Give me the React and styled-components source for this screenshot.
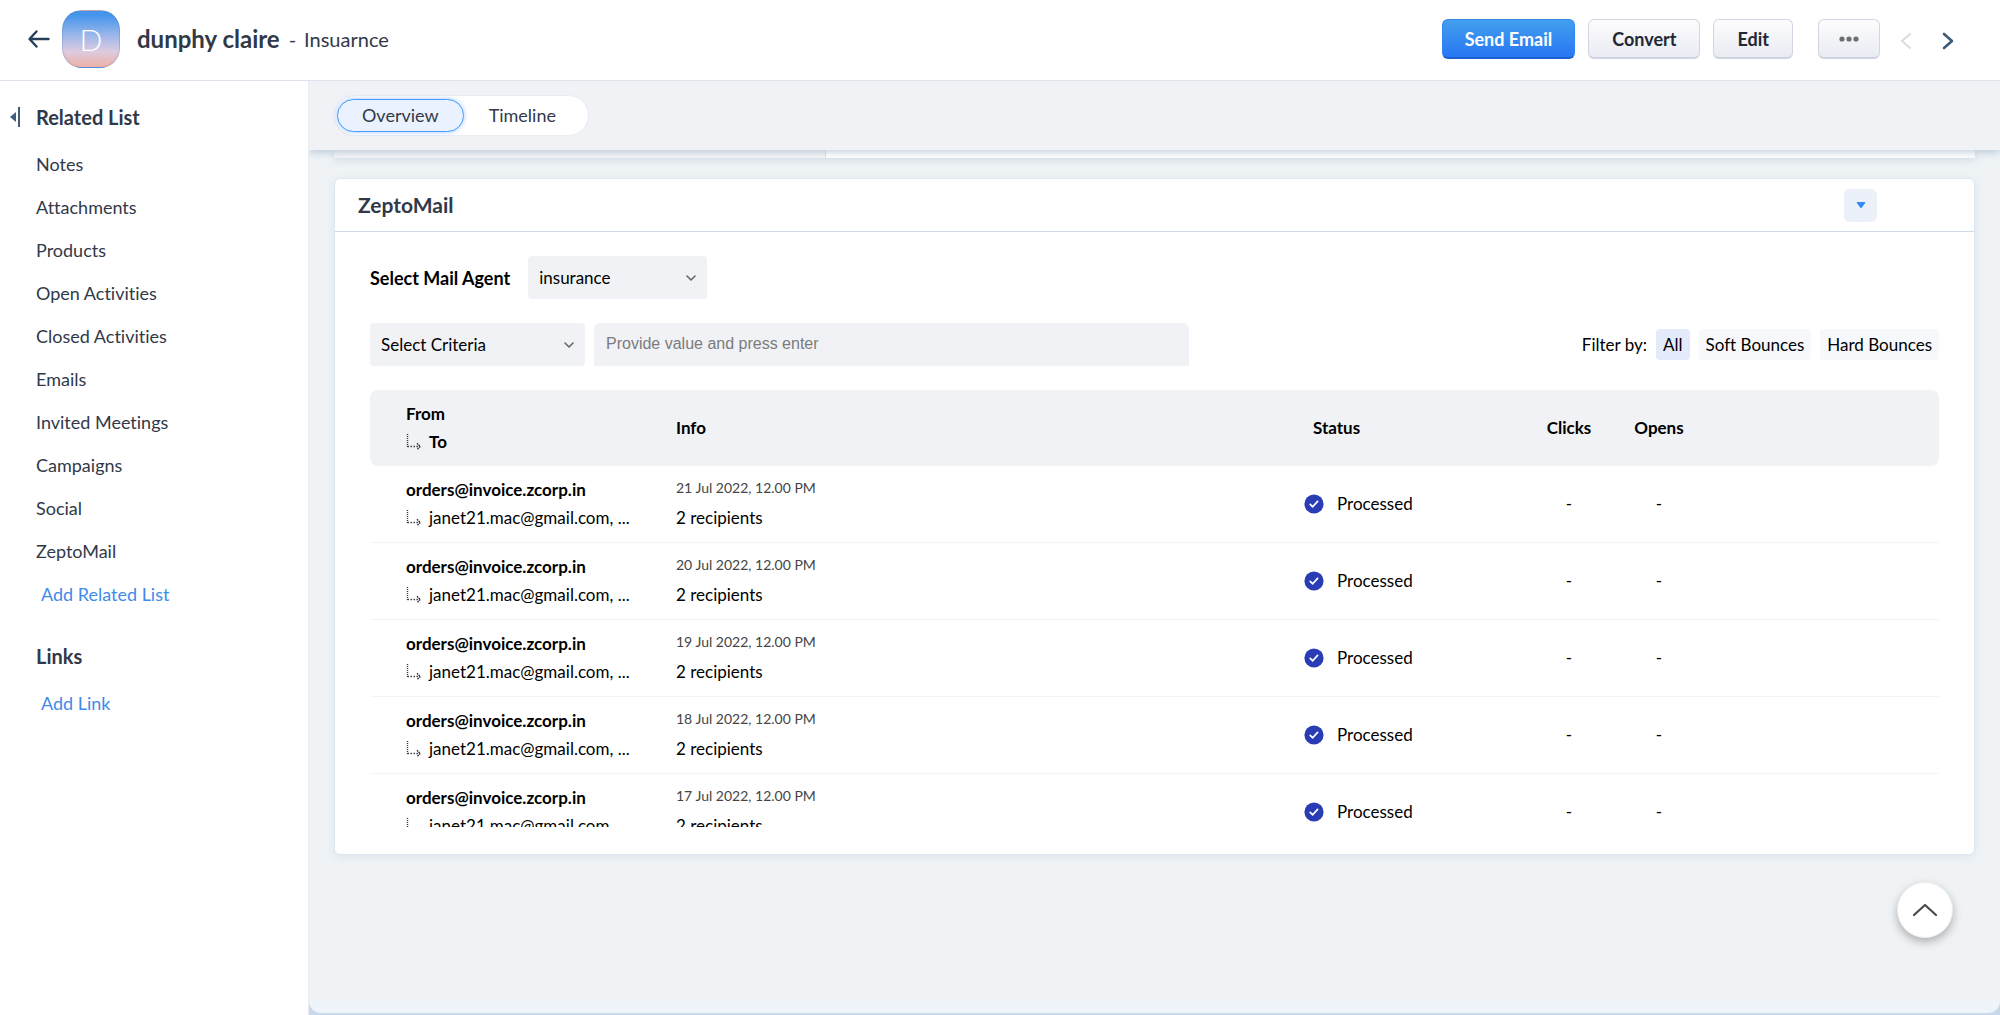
import React from 'react'
import styled, { createGlobalStyle } from 'styled-components'

const GlobalStyle = createGlobalStyle`
* {
    box-sizing: border-box;
}
body {
    margin: 0;
    background: #c9d8ea;
    color: #313949;
    font-family: Lato, "Liberation Sans", sans-serif;
    font-size: 18px;
    font-variant-ligatures: none;
    line-height: 24px;
}
button, select {
    font: inherit;
    font-variant-ligatures: none;
    color: inherit;
}
a {
    color: inherit;
    text-decoration: none;
}
`

const relatedLists = [
    'Notes',
    'Attachments',
    'Products',
    'Open Activities',
    'Closed Activities',
    'Emails',
    'Invited Meetings',
    'Campaigns',
    'Social',
    'ZeptoMail',
]

const mails = [
    { id: 1, date: '21 Jul 2022, 12.00 PM' },
    { id: 2, date: '20 Jul 2022, 12.00 PM' },
    { id: 3, date: '19 Jul 2022, 12.00 PM' },
    { id: 4, date: '18 Jul 2022, 12.00 PM' },
    { id: 5, date: '17 Jul 2022, 12.00 PM' },
]

const filters = ['All', 'Soft Bounces', 'Hard Bounces']

function BackIcon() {
    return (
        <svg width="24" height="20" viewBox="0 0 24 20" fill="none" stroke="#26405c" strokeWidth="2.4" strokeLinecap="round" strokeLinejoin="round">
            <path d="M21.500 10H3M9.500 2.500L2.500 10l7 7.500" />
        </svg>
    )
}

function Chevron({ d, width, height, color, stroke }) {
    return (
        <svg width={width} height={height} viewBox={`0 0 ${width} ${height}`} fill="none" stroke={color} strokeWidth={stroke} strokeLinecap="round" strokeLinejoin="round">
            <path d={d} />
        </svg>
    )
}

function ReplyArrow() {
    return (
        <svg width="16" height="17" viewBox="0 0 16 17" fill="none" stroke="#333" strokeWidth="1.4">
            <path d="M1.5 0v13" strokeDasharray="1 1" />
            <path d="M1.5 12.5h11" strokeDasharray="1.4 1.6" />
            <path d="M11 9.300l3.300 3.200-3.300 3.200" strokeDasharray="1.6 .7" />
        </svg>
    )
}

function CheckIcon() {
    return (
        <svg width="20" height="20" viewBox="0 0 20 20">
            <circle cx="10" cy="10" r="9.6" fill="#2a3cb4" />
            <path d="M6.2 10.4l2.5 2.4 4.9-5.4" fill="none" stroke="#fff" strokeWidth="1.7" strokeLinecap="round" strokeLinejoin="round" />
        </svg>
    )
}

export default function App() {
    return (
        <Page>
            <GlobalStyle />
            <Header>
                <IconButton aria-label="Back"><BackIcon /></IconButton>
                <Avatar>D</Avatar>
                <Title>dunphy claire</Title>
                <Company><span>-</span>Insuarnce</Company>
                <Actions>
                    <Button $primary>Send Email</Button>
                    <Button>Convert</Button>
                    <Button>Edit</Button>
                    <MoreButton aria-label="More">
                        <svg width="20" height="6" viewBox="0 0 20 6" fill="#6d6e72">
                            <circle cx="3" cy="3" r="2.6" />
                            <circle cx="10" cy="3" r="2.6" />
                            <circle cx="17" cy="3" r="2.6" />
                        </svg>
                    </MoreButton>
                    <Pager>
                        <IconButton aria-label="Previous record" disabled>
                            <Chevron width={12} height={18} color="#d9dee3" stroke={2.2} d="M10 2L2 9l8 7" />
                        </IconButton>
                        <IconButton aria-label="Next record">
                            <Chevron width={12} height={18} color="#3c5a78" stroke={2.6} d="M2 2l8 7-8 7" />
                        </IconButton>
                    </Pager>
                </Actions>
            </Header>
            <Body>
                <Sidebar>
                    <SideHead>
                        <IconButton aria-label="Collapse">
                            <svg width="12" height="20" viewBox="0 0 12 20" fill="#3f5c78">
                                <path d="M0 10l6-5v10z" />
                                <path d="M8 0h2v20H8z" />
                            </svg>
                        </IconButton>
                        <SideTitle>Related List</SideTitle>
                    </SideHead>
                    <SideList>
                        {relatedLists.map(name => (
                            <li key={name}><SideLink href="#">{name}</SideLink></li>
                        ))}
                        <li><SideLink href="#" $add>Add Related List</SideLink></li>
                    </SideList>
                    <SideHead $spaced>
                        <SideTitle>Links</SideTitle>
                    </SideHead>
                    <SideList>
                        <li><SideLink href="#" $add>Add Link</SideLink></li>
                    </SideList>
                </Sidebar>
                <Content>
                    <TabBar>
                        <Tabs>
                            <Tab $active>Overview</Tab>
                            <Tab>Timeline</Tab>
                        </Tabs>
                    </TabBar>
                    <Scroll>
                        <PreviousCard><span /></PreviousCard>
                        <Card>
                            <CardHead>
                                <CardTitle>ZeptoMail</CardTitle>
                                <CardMenu aria-label="ZeptoMail options">
                                    <svg width="10" height="8" viewBox="0 0 10 8" fill="#338cf5">
                                        <path d="M1.200 1h7.600q.8 0 .4.900L5.700 6.700q-.7.700-1.400 0L.8 1.900Q.4 1 1.200 1z" />
                                    </svg>
                                </CardMenu>
                            </CardHead>
                            <CardBody>
                                <FormRow>
                                    <AgentLabel htmlFor="agent">Select Mail Agent</AgentLabel>
                                    <SelectBox $width="179px">
                                        <Select id="agent"><option>insurance</option></Select>
                                        <Chevron width={10} height={8} color="#666" stroke={1.6} d="M1 2l4 4 4-4" />
                                    </SelectBox>
                                </FormRow>
                                <FormRow>
                                    <SelectBox $width="215px">
                                        <Select aria-label="Criteria"><option>Select Criteria</option></Select>
                                        <Chevron width={10} height={8} color="#666" stroke={1.6} d="M1 2l4 4 4-4" />
                                    </SelectBox>
                                    <SearchInput aria-label="Value" placeholder="Provide value and press enter" />
                                    <Filters>
                                        <span>Filter by:</span>
                                        {filters.map((name, i) => (
                                            <FilterButton key={name} $active={i === 0}>{name}</FilterButton>
                                        ))}
                                    </Filters>
                                </FormRow>
                                <TableWrap>
                                    <Table>
                                        <colgroup>
                                            <Col $width="306px" />
                                            <Col />
                                            <Col $width="220px" />
                                            <Col $width="90px" />
                                            <Col $width="90px" />
                                            <Col $width="235px" />
                                        </colgroup>
                                        <thead>
                                            <tr>
                                                <Th>
                                                    From
                                                    <To><ReplyArrow />To</To>
                                                </Th>
                                                <Th>Info</Th>
                                                <Th $indent>Status</Th>
                                                <Th $center>Clicks</Th>
                                                <Th $center>Opens</Th>
                                                <Th />
                                            </tr>
                                        </thead>
                                        <tbody>
                                            {mails.map(mail => (
                                                <tr key={mail.id}>
                                                    <Td>
                                                        <strong>orders@invoice.zcorp.in</strong>
                                                        <To><ReplyArrow />janet21.mac@gmail.com, ...</To>
                                                    </Td>
                                                    <Td>
                                                        <MailDate>{mail.date}</MailDate>
                                                        2 recipients
                                                    </Td>
                                                    <Td><Status><CheckIcon />Processed</Status></Td>
                                                    <Td $center>-</Td>
                                                    <Td $center>-</Td>
                                                    <Td />
                                                </tr>
                                            ))}
                                        </tbody>
                                    </Table>
                                </TableWrap>
                            </CardBody>
                        </Card>
                        <TopButton aria-label="Back to top">
                            <Chevron width={26} height={16} color="#4a4a4a" stroke={2.2} d="M2 13L13 3l11 10" />
                        </TopButton>
                    </Scroll>
                </Content>
            </Body>
        </Page>
    )
}

const Page = styled.div`
display: flex;
flex-direction: column;
min-height: 100vh;
`

const Header = styled.header`
display: flex;
align-items: center;
height: 81px;
padding: 0 46px 2px 27px;
background: #fff;
border-bottom: 1px solid #dbe2ec;
`

const IconButton = styled.button`
display: flex;
padding: 0;
border: 0;
background: none;
`

const Avatar = styled.div`
width: 58px;
height: 58px;
margin: 0 17px 0 11px;
border: 1px solid rgba(90, 120, 180, .3);
border-radius: 20px;
background: linear-gradient(#4595ec 8%, #94b4ea 40%, #dccbe0 72%, #eeb0a6);
color: #fff;
font-size: 30px;
font-weight: 300;
line-height: 56px;
text-align: center;
`

const Title = styled.h1`
margin: 0;
font-size: 24px;
line-height: 28px;
`

const Company = styled.span`
display: flex;
gap: 8px;
margin-left: 9px;
font-size: 20px;
`

const Actions = styled.div`
display: flex;
align-items: center;
gap: 13px;
margin-left: auto;
`

const Button = styled.button`
height: 40px;
padding: ${p => (p.$primary ? '0 22px' : '0 23px')};
border: 1px solid ${p => (p.$primary ? '#3585ee' : '#d3d6e2')};
border-bottom: 2px solid ${p => (p.$primary ? '#1c5fd0' : '#cfd2df')};
border-radius: 6px;
background: ${p => (p.$primary ? 'linear-gradient(#42a0ee, #2876f4)' : 'linear-gradient(#fdfdfe, #e9ebf3)')};
color: ${p => (p.$primary ? '#fff' : '#222834')};
font-weight: 700;
`

const MoreButton = styled(Button)`
display: flex;
align-items: center;
margin-left: 12px;
padding: 0 20px;
`

const Pager = styled.div`
display: flex;
gap: 30px;
margin-left: 7px;
padding-top: 3px;
`

const Body = styled.div`
display: flex;
flex: 1;
`

const Sidebar = styled.aside`
flex: 0 0 309px;
padding-top: 22px;
border-right: 1px solid #e8ebf0;
background: #fff;
`

const SideHead = styled.div`
display: flex;
align-items: center;
gap: 14px;
height: 28px;
margin-top: ${p => (p.$spaced ? '26px' : '0')};
padding-left: ${p => (p.$spaced ? '36px' : '10px')};
`

const SideTitle = styled.h2`
margin: 0;
font-size: 20px;
`

const SideList = styled.ul`
margin: 0;
padding: 12px 0 0;
list-style: none;
`

const SideLink = styled.a`
display: block;
height: 43px;
padding-left: ${p => (p.$add ? '41px' : '36px')};
color: ${p => (p.$add ? '#3f8be8' : '#313949')};
line-height: 43px;
`

const Content = styled.main`
display: flex;
flex: 1;
flex-direction: column;
min-width: 0;
margin-bottom: 2px;
border-bottom: 12px solid #eff4fa;
border-radius: 0 0 12px 12px;
background: #eff3f6;
overflow: hidden;
`

const TabBar = styled.div`
position: relative;
display: flex;
height: 69px;
padding: 14px 25px;
background: #f1f2f6;
box-shadow: 0 2px 8px rgba(100, 130, 160, .4);
`

const Tabs = styled.div`
display: flex;
padding: 3px 7px 3px 2px;
border: 1px solid #e9ecf3;
border-radius: 21px;
background: #fff;
`

const Tab = styled.button`
padding: 0 24px 2px;
border: 1px solid ${p => (p.$active ? '#4a9cf5' : 'transparent')};
border-radius: 18px;
background: ${p => (p.$active ? '#ebf2ff' : 'none')};
box-shadow: ${p => (p.$active ? '0 0 4px rgba(60, 140, 250, .5)' : 'none')};
`

const Scroll = styled.div`
padding: 0 25px;
`

const PreviousCard = styled.div`
height: 8px;
margin-bottom: 20px;
background: #fff;
box-shadow: 0 2px 8px rgba(100, 130, 160, .2);
span {
    display: block;
    width: 30%;
    height: 8px;
    border-right: 1px solid #e0e4ea;
    background: #f5f5f7;
}
`

const Card = styled.section`
border: 1px solid #dee6ef;
border-radius: 6px;
background: #fff;
box-shadow: 0 2px 8px rgba(100, 130, 160, .12);
`

const CardHead = styled.div`
display: flex;
align-items: center;
justify-content: space-between;
height: 53px;
padding: 0 97px 0 23px;
border-bottom: 1px solid #cfdae5;
`

const CardTitle = styled.h2`
margin: 0;
font-size: 21px;
`

const CardMenu = styled.button`
display: flex;
align-items: center;
justify-content: center;
width: 33px;
height: 33px;
padding: 0;
border: 0;
border-radius: 6px;
background: #ebf0f9;
`

const CardBody = styled.div`
padding: 24px 35px 27px;
color: #000;
font-size: 17px;
`

const FormRow = styled.div`
display: flex;
align-items: center;
gap: 9px;
margin-bottom: 24px;
`

const AgentLabel = styled.label`
margin-right: 9px;
font-size: 18px;
font-weight: 700;
`

const SelectBox = styled.div`
display: flex;
align-items: center;
width: ${p => p.$width};
height: 43px;
padding-right: 11px;
border-radius: 4px;
background: #f1f2f6;
`

const Select = styled.select`
flex: 1;
min-width: 0;
height: 43px;
padding: 0 11px;
border: 0;
background: none;
appearance: none;
`

const SearchInput = styled.input`
flex: 0 1 595px;
min-width: 0;
height: 43px;
padding: 0 12px 2px;
border: 0;
border-radius: 6px 6px 0 0;
background: #f1f2f6;
font: 16px "Liberation Sans", Arial, sans-serif;
&::placeholder {
    color: #7b7b7b;
}
`

const Filters = styled.div`
display: flex;
align-items: center;
gap: 9px;
margin-left: auto;
white-space: nowrap;
`

const FilterButton = styled.button`
height: 31px;
padding: 0 7px;
border: 0;
border-radius: 4px;
background: ${p => (p.$active ? '#e3eafa' : '#f7f8fc')};
`

const TableWrap = styled.div`
height: 437px;
overflow: hidden;
`

const Table = styled.table`
width: 100%;
border-collapse: separate;
border-spacing: 0;
table-layout: fixed;
`

const Col = styled.col`
width: ${p => p.$width || 'auto'};
`

const Th = styled.th`
height: 76px;
padding: 0 0 0 ${p => (p.$indent ? '9px' : '0')};
background: #f1f2f6;
text-align: ${p => (p.$center ? 'center' : 'left')};
line-height: 28px;
&:first-child {
    padding-left: 36px;
    border-radius: 8px 0 0 8px;
}
&:last-child {
    border-radius: 0 8px 8px 0;
}
`

const Td = styled.td`
height: 77px;
padding: 0;
border-bottom: 1px solid #f4f4f7;
text-align: ${p => (p.$center ? 'center' : 'left')};
line-height: 28px;
&:first-child {
    padding-left: 36px;
}
`

const To = styled.div`
display: flex;
align-items: center;
gap: 7px;
white-space: nowrap;
`

const MailDate = styled.div`
padding-bottom: 4px;
color: #444;
font-size: 14px;
line-height: 24px;
`

const Status = styled.div`
display: flex;
align-items: center;
gap: 13px;
`

const TopButton = styled.button`
position: fixed;
right: 47px;
bottom: 77px;
display: flex;
align-items: center;
justify-content: center;
width: 56px;
height: 56px;
padding: 0;
border: 1px solid #eee;
border-radius: 50%;
background: #fff;
box-shadow: 0 4px 10px rgba(0, 0, 0, .28);
`
